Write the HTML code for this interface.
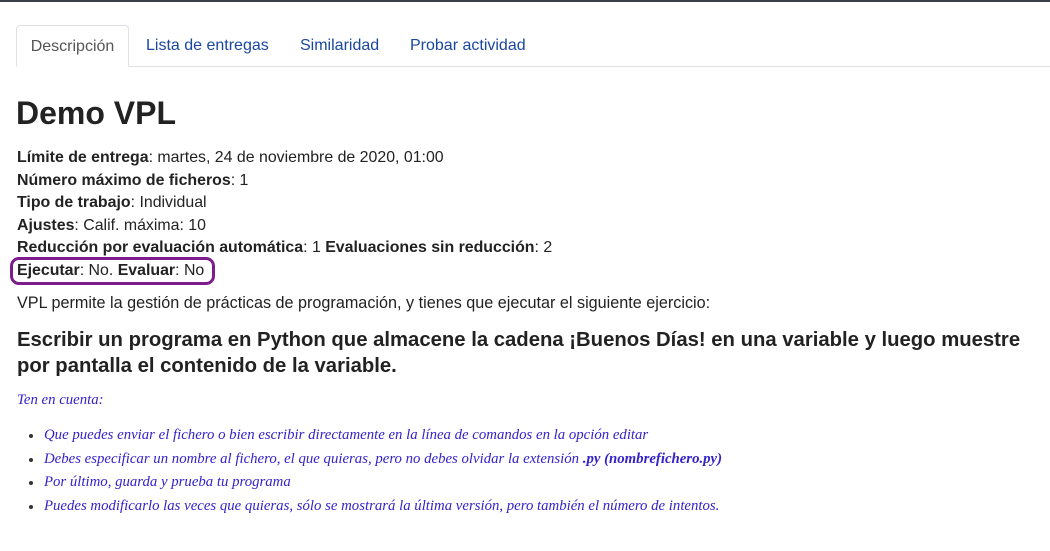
<!DOCTYPE html>
<html><head><meta charset="utf-8"><style>
body{margin:0;background:#fff;font-family:"Liberation Sans",sans-serif;color:#222;width:1050px;height:551px;overflow:hidden;position:relative}
.top{position:absolute;left:0;top:0;width:1050px;height:2px;background:#3a3f4a}
.tabs{position:absolute;left:16px;top:25px;right:0;height:41px;border-bottom:1px solid #dee2e6}
.tab{position:absolute;top:0;height:41px;line-height:41px;font-size:16px;color:#1a47a0;white-space:nowrap}
.tab.a{left:0;width:113px;border:1px solid #dee2e6;border-bottom:1px solid #fff;border-radius:4px 4px 0 0;color:#555;text-align:center;box-sizing:border-box;height:42px;background:#fff}
h1{position:absolute;left:16px;top:95px;margin:0;font-size:32px;font-weight:bold;color:#222}
.info{position:absolute;left:17px;top:147px;font-size:15.9px;line-height:22.5px}
.circ{position:absolute;left:10px;top:257px;width:205px;height:28px;border:3px solid #7d1d8c;border-radius:9px;box-sizing:border-box}
.p{position:absolute;left:17px;top:294px;font-size:16.2px;white-space:nowrap}
h3{position:absolute;left:17px;top:327px;margin:0;font-size:20.3px;line-height:26px;font-weight:bold;width:1020px}
.it{font-family:"Liberation Serif",serif;font-style:italic;color:#3322cc;font-size:14.8px;position:absolute}
ul{margin:0;padding:0;list-style:none}
li{position:absolute;left:44px;white-space:nowrap}
li:before{content:"";position:absolute;left:-15px;top:7px;width:4px;height:4px;border-radius:50%;background:#333}
</style></head><body>
<div class="top"></div>
<div class="tabs">
<div class="tab a">Descripción</div>
<div class="tab" style="left:130px">Lista de entregas</div>
<div class="tab" style="left:284px">Similaridad</div>
<div class="tab" style="left:394px">Probar actividad</div>
</div>
<h1>Demo VPL</h1>
<div class="info">
<b>Límite de entrega</b>: martes, 24 de noviembre de 2020, 01:00<br>
<b>Número máximo de ficheros</b>: 1<br>
<b>Tipo de trabajo</b>: Individual<br>
<b>Ajustes</b>: Calif. máxima: 10<br>
<b>Reducción por evaluación automática</b>: 1 <b>Evaluaciones sin reducción</b>: 2<br>
<b>Ejecutar</b>: No. <b>Evaluar</b>: No
</div>
<div class="circ"></div>
<div class="p">VPL permite la gestión de prácticas de programación, y tienes que ejecutar el siguiente ejercicio:</div>
<h3>Escribir un programa en Python que almacene la cadena ¡Buenos Días! en una variable y luego muestre por pantalla el contenido de la variable.</h3>
<div class="it" style="left:17px;top:392px">Ten en cuenta:</div>
<ul class="it" style="left:0;top:0">
<li style="top:427px">Que puedes enviar el fichero o bien escribir directamente en la línea de comandos en la opción editar</li>
<li style="top:451px">Debes especificar un nombre al fichero, el que quieras, pero no debes olvidar la extensión <b>.py (nombrefichero.py)</b></li>
<li style="top:474px">Por último, guarda y prueba tu programa</li>
<li style="top:498px">Puedes modificarlo las veces que quieras, sólo se mostrará la última versión, pero también el número de intentos.</li>
</ul>
</body></html>
